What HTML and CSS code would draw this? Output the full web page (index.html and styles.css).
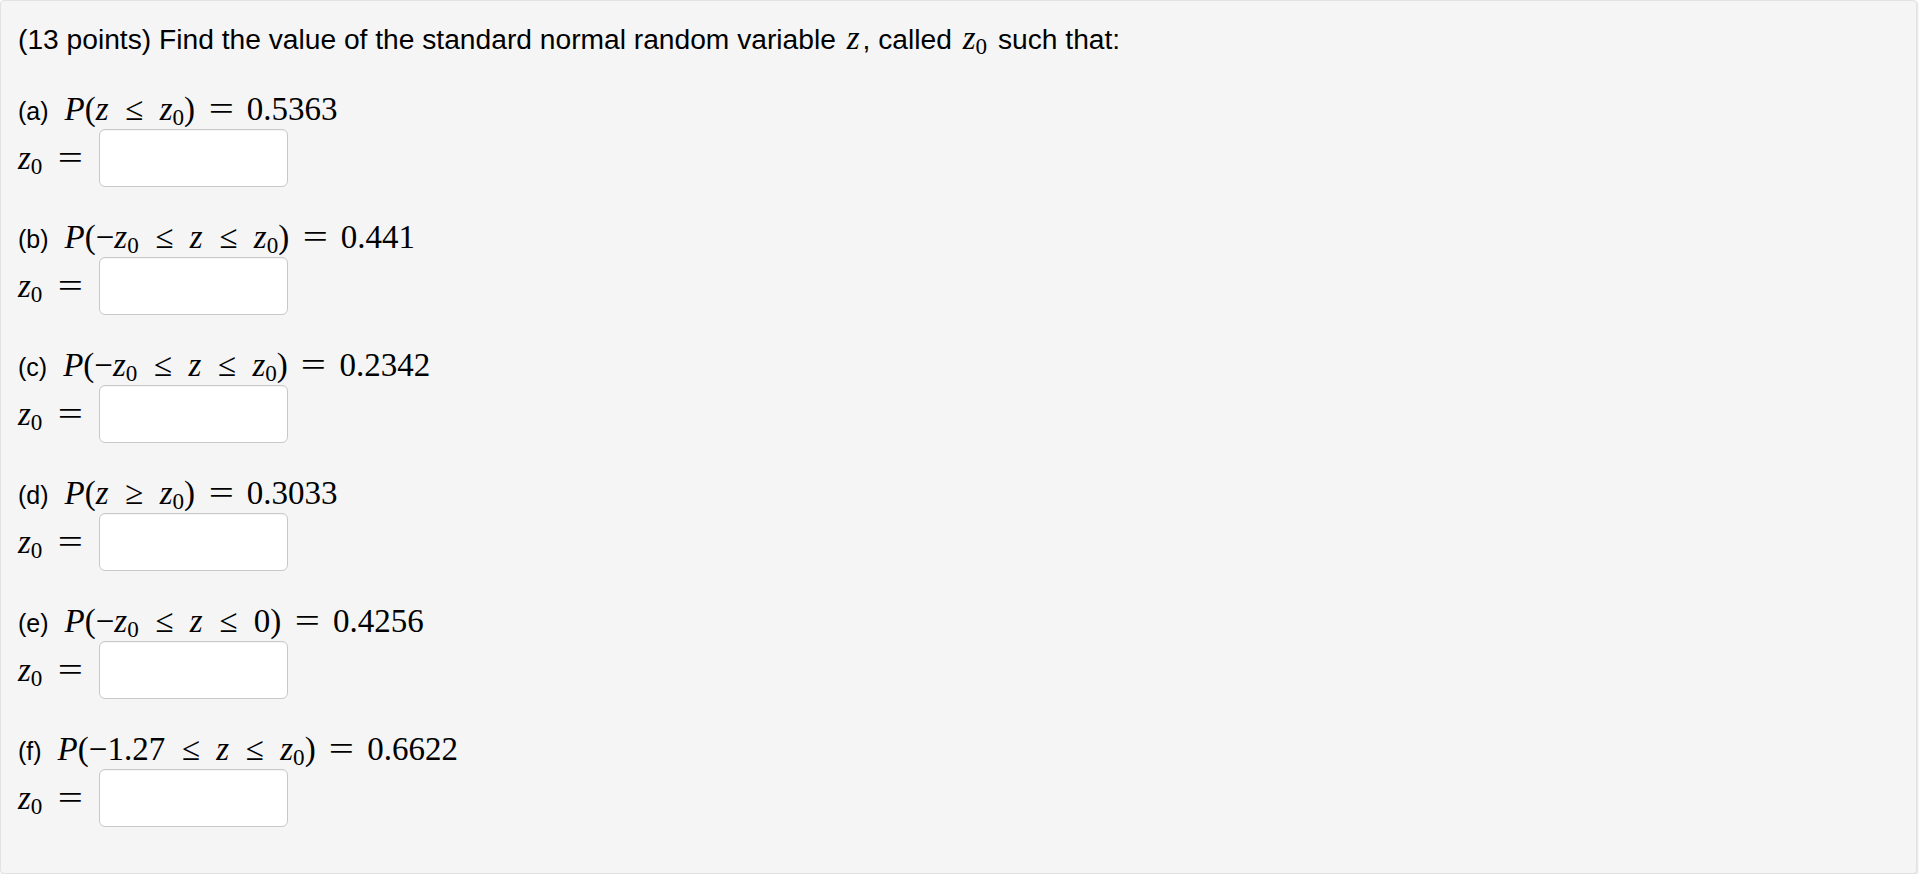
FILE: index.html
```html
<!DOCTYPE html>
<html>
<head>
<meta charset="utf-8">
<title>Standard normal</title>
<link rel="stylesheet" href="styles.css">
</head>
<body>
<div class="panel">
  <p class="head">(13 points) Find the value of the standard normal random variable <span class="m hm"><i>z</i></span>, called <span class="m hm"><i>z</i><span class="sub">0</span></span> such that:</p>
  <div class="parts">
    <div class="part">
      <div class="q"><span class="lab">(a)</span><span class="m"><i>P</i>(<i>z</i><span class="rel">≤</span><i>z</i><span class="sub">0</span>)<span class="rel eqs">=</span>0.5363</span></div>
      <div class="ans"><span class="m"><i>z</i><span class="sub">0</span></span><span class="m eq">=</span><input class="box" type="text"></div>
    </div>
    <div class="part">
      <div class="q"><span class="lab">(b)</span><span class="m"><i>P</i>(−<i>z</i><span class="sub">0</span><span class="rel">≤</span><i>z</i><span class="rel">≤</span><i>z</i><span class="sub">0</span>)<span class="rel eqs">=</span>0.441</span></div>
      <div class="ans"><span class="m"><i>z</i><span class="sub">0</span></span><span class="m eq">=</span><input class="box" type="text"></div>
    </div>
    <div class="part">
      <div class="q"><span class="lab">(c)</span><span class="m"><i>P</i>(−<i>z</i><span class="sub">0</span><span class="rel">≤</span><i>z</i><span class="rel">≤</span><i>z</i><span class="sub">0</span>)<span class="rel eqs">=</span>0.2342</span></div>
      <div class="ans"><span class="m"><i>z</i><span class="sub">0</span></span><span class="m eq">=</span><input class="box" type="text"></div>
    </div>
    <div class="part">
      <div class="q"><span class="lab">(d)</span><span class="m"><i>P</i>(<i>z</i><span class="rel">≥</span><i>z</i><span class="sub">0</span>)<span class="rel eqs">=</span>0.3033</span></div>
      <div class="ans"><span class="m"><i>z</i><span class="sub">0</span></span><span class="m eq">=</span><input class="box" type="text"></div>
    </div>
    <div class="part">
      <div class="q"><span class="lab">(e)</span><span class="m"><i>P</i>(−<i>z</i><span class="sub">0</span><span class="rel">≤</span><i>z</i><span class="rel">≤</span>0)<span class="rel eqs">=</span>0.4256</span></div>
      <div class="ans"><span class="m"><i>z</i><span class="sub">0</span></span><span class="m eq">=</span><input class="box" type="text"></div>
    </div>
    <div class="part">
      <div class="q"><span class="lab">(f)</span><span class="m"><i>P</i>(−1.27<span class="rel">≤</span><i>z</i><span class="rel">≤</span><i>z</i><span class="sub">0</span>)<span class="rel eqs">=</span>0.6622</span></div>
      <div class="ans"><span class="m"><i>z</i><span class="sub">0</span></span><span class="m eq">=</span><input class="box" type="text"></div>
    </div>
  </div>
</div>
</body>
</html>
```

FILE: styles.css
```css
html, body {
  margin: 0;
  padding: 0;
  background: #ffffff;
}

body {
  font-family: "Liberation Sans", Arial, sans-serif;
  color: #000;
}

.panel {
  width: 1917px;
  height: 874px;
  box-sizing: border-box;
  background: #f5f5f5;
  border: 1px solid #e2e2e2;
  border-radius: 4px;
  box-shadow: 1px 1px 2px rgba(0, 0, 0, 0.12);
  padding: 19px 0 0 17px;
}

.head {
  margin: 0;
  font-size: 28.2px;
  height: 36px;
  line-height: 36px;
  white-space: nowrap;
}

.hm {
  margin: 0 3px;
}

.parts {
  display: flex;
  flex-direction: column;
  gap: 32px;
  margin-top: 35px;
}

.part {
  display: flex;
  flex-direction: column;
  gap: 2px;
}

.q {
  height: 36px;
  display: flex;
  align-items: baseline;
  font-size: 25px;
  line-height: 36px;
  white-space: nowrap;
}

.lab {
  margin-right: 16px;
}

.m {
  font-family: "Liberation Serif", "Times New Roman", serif;
  font-size: 33px;
  white-space: nowrap;
}

.m i {
  font-style: italic;
}

.sub {
  font-size: 0.7em;
  position: relative;
  top: 0.22em;
}

.rel {
  margin: 0 0.5em;
}

.eqs,
.eq {
  display: inline-block;
  transform: scaleX(1.35);
}

.ans {
  height: 58px;
  display: flex;
  align-items: center;
}

.eq {
  margin-left: 19px;
}

.box {
  width: 189px;
  height: 58px;
  box-sizing: border-box;
  border: 1px solid #c8c8c8;
  border-radius: 6px;
  background: #ffffff;
  margin: 0 0 0 19px;
  padding: 0;
  box-shadow: inset 0 1px 1px rgba(0, 0, 0, 0.04);
}
```
